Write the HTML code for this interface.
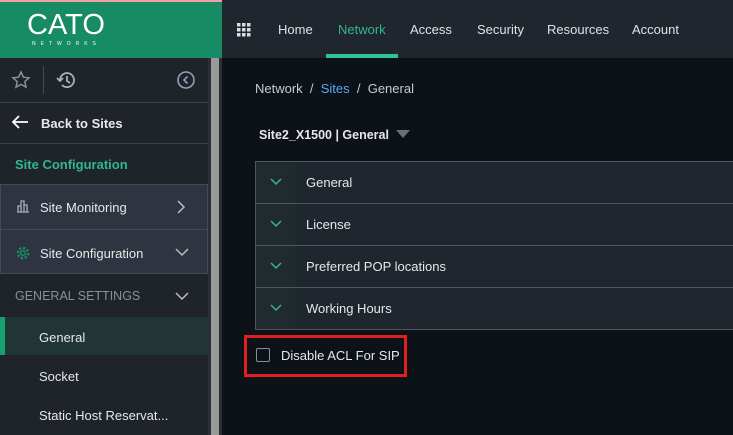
<!DOCTYPE html>
<html><head><style>
*{margin:0;padding:0;box-sizing:border-box}
body{width:733px;height:435px;overflow:hidden;background:#0c1218;font-family:"Liberation Sans",sans-serif;position:relative;color:#e6e8ea;font-size:13px}
.a{position:absolute}
.nav{left:222px;top:0;width:511px;height:58px;background:#20262e}
.nav span{position:absolute;top:22px;font-size:13px;color:#dfe2e5}
.side{left:0;top:58px;width:208px;height:377px;background:#1f242b}
.row{position:absolute;left:0;width:208px}
.acc{position:absolute;left:255px;width:480px;height:42px;border:1px solid #50565d;border-bottom:none;background:#20262e}
.acc .c{position:absolute;left:0;top:0;width:39px;height:41px;background:#1f2b2f}
.acc span{position:absolute;left:50px;top:13px}
</style></head><body>
<div class="a" style="left:0;top:0;width:733px;height:2px;background:#f0a0a8"></div>
<div class="a" style="left:0;top:2px;width:222px;height:56px;background:#178b63"></div>
<div class="a" style="left:27px;top:9px;font-size:29px;color:#fff;letter-spacing:0px;font-weight:300">CATO</div>
<div class="a" style="left:32px;top:41px;font-size:5px;color:#fff;letter-spacing:5px">NETWORKS</div>
<div class="a nav">
<svg class="a" style="left:15px;top:23px" width="14" height="14"><g fill="#ddd"><rect x="0" y="0" width="3.5" height="3.5"/><rect x="5" y="0" width="3.5" height="3.5"/><rect x="10" y="0" width="3.5" height="3.5"/><rect x="0" y="5" width="3.5" height="3.5"/><rect x="5" y="5" width="3.5" height="3.5"/><rect x="10" y="5" width="3.5" height="3.5"/><rect x="0" y="10" width="3.5" height="3.5"/><rect x="5" y="10" width="3.5" height="3.5"/><rect x="10" y="10" width="3.5" height="3.5"/></g></svg>
<span style="left:56px">Home</span>
<span style="left:116px;color:#2fb88a">Network</span>
<div class="a" style="left:104px;top:54px;width:72px;height:4px;background:#2fc294"></div>
<span style="left:188px">Access</span>
<span style="left:255px">Security</span>
<span style="left:325px">Resources</span>
<span style="left:410px">Account</span>
</div>
<div class="a side">
<svg class="a" style="left:11px;top:12px" width="20" height="20"><path d="M10 2l2.4 5.2 5.6.6-4.2 3.8 1.2 5.6L10 14.4 5 17.2l1.2-5.6L2 7.8l5.6-.6z" fill="none" stroke="#8a9099" stroke-width="1.5"/></svg>
<div class="a" style="left:43px;top:8px;width:1px;height:28px;background:#454b53"></div>
<svg class="a" style="left:55px;top:11px" width="22" height="22"><path d="M5 11a7 7 0 1 1 2 5" fill="none" stroke="#aab0b8" stroke-width="1.8"/><path d="M2 9l3 3 3-3" fill="none" stroke="#aab0b8" stroke-width="1.8"/><path d="M12 7v5l3 2" fill="none" stroke="#aab0b8" stroke-width="1.8"/></svg>
<svg class="a" style="left:176px;top:12px" width="20" height="20"><circle cx="10" cy="10" r="8" fill="none" stroke="#8fa2bd" stroke-width="1.6"/><path d="M11.5 6.5L8 10l3.5 3.5" fill="none" stroke="#8fa2bd" stroke-width="1.6"/></svg>
<div class="row" style="top:44px;height:1px;background:#3d434b"></div>
<svg class="a" style="left:11px;top:57px" width="18" height="14"><path d="M17 7H2M8 1L2 7l6 6" fill="none" stroke="#fff" stroke-width="1.8"/></svg>
<div class="a" style="left:41px;top:58px;font-weight:bold;font-size:13px">Back to Sites</div>
<div class="row" style="top:85px;height:1px;background:#3d434b"></div>
<div class="a" style="left:15px;top:99px;color:#2fb88a;font-weight:bold;font-size:13px">Site Configuration</div>
<div class="row" style="top:126px;height:90px;background:#2f3540;border:1px solid #454b53"></div>
<div class="row" style="top:171px;height:1px;background:#454b53"></div>
<svg class="a" style="left:16px;top:141px" width="14" height="14"><path d="M1 13h12M2 13V7h3v6M5 13V2h3v11M8 13V6h3v7" fill="none" stroke="#aab0b8" stroke-width="1.3"/></svg>
<div class="a" style="left:40px;top:142px">Site Monitoring</div>
<svg class="a" style="left:176px;top:142px" width="10" height="14"><path d="M2 1l6 6-6 6" fill="none" stroke="#bbb" stroke-width="1.5"/></svg>
<svg class="a" style="left:15px;top:187px" width="16" height="16"><circle cx="8" cy="8" r="5" fill="none" stroke="#178b63" stroke-width="2.5" stroke-dasharray="2.2 1.7"/><circle cx="8" cy="8" r="2.3" fill="none" stroke="#178b63" stroke-width="1.5"/></svg>
<div class="a" style="left:40px;top:188px">Site Configuration</div>
<svg class="a" style="left:175px;top:189px" width="14" height="10"><path d="M1 2l6 6 6-6" fill="none" stroke="#bbb" stroke-width="1.5"/></svg>
<div class="a" style="left:15px;top:231px;color:#8a9099;font-size:12.5px">GENERAL SETTINGS</div>
<svg class="a" style="left:175px;top:233px" width="14" height="10"><path d="M1 2l6 6 6-6" fill="none" stroke="#bbb" stroke-width="1.5"/></svg>
<div class="row" style="top:259px;height:38px;background:#213537"></div>
<div class="a" style="left:0;top:259px;width:5px;height:38px;background:#17a070"></div>
<div class="a" style="left:39px;top:272px">General</div>
<div class="a" style="left:39px;top:311px">Socket</div>
<div class="a" style="left:39px;top:350px">Static Host Reservat...</div>
</div>
<div class="a" style="left:208px;top:58px;width:14px;height:377px;background:#2a2f36"></div>
<div class="a" style="left:211px;top:58px;width:8px;height:377px;background:#9a9a9a"></div>
<div class="a" style="left:255px;top:81px;color:#c8ccd0">Network &nbsp;/&nbsp; <span style="color:#5aa8f0">Sites</span> &nbsp;/&nbsp; General</div>
<div class="a" style="left:259px;top:128px;font-weight:bold;font-size:12.5px">Site2_X1500 | General</div>
<svg class="a" style="left:396px;top:130px" width="14" height="9"><path d="M0 0h14L7 8z" fill="#6a6f75"/></svg>
<div class="acc" style="top:161px"><div class="c"></div><span>General</span></div>
<div class="acc" style="top:203px"><div class="c"></div><span>License</span></div>
<div class="acc" style="top:245px"><div class="c"></div><span>Preferred POP locations</span></div>
<div class="acc" style="top:287px;height:43px;border-bottom:1px solid #50565d"><div class="c"></div><span>Working Hours</span></div>
<svg class="a" style="left:270px;top:178px" width="12" height="140"><g fill="none" stroke="#2fb88a" stroke-width="1.5"><path d="M1 1l5 5 5-5"/><path d="M1 43l5 5 5-5"/><path d="M1 85l5 5 5-5"/><path d="M1 127l5 5 5-5"/></g></svg>
<div class="a" style="left:244px;top:335px;width:163px;height:42px;border:3px solid #e0201f"></div>
<div class="a" style="left:256px;top:348px;width:14px;height:14px;border:1.5px solid #8a9099;border-radius:2px"></div>
<div class="a" style="left:281px;top:348px">Disable ACL For SIP</div>
</body></html>
